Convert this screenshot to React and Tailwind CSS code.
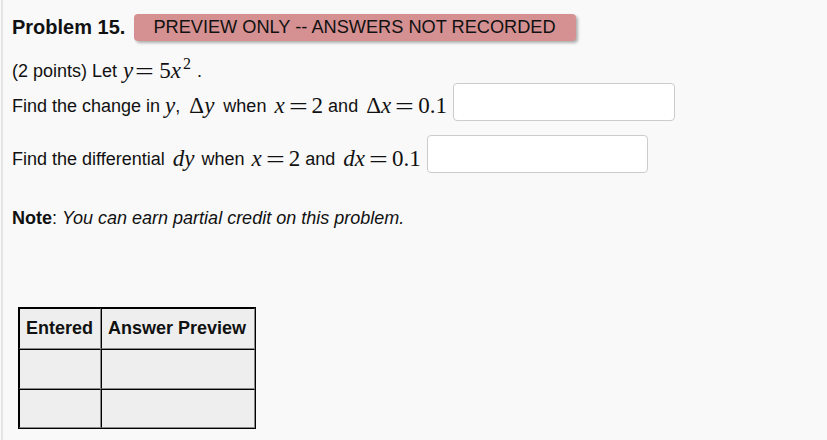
import React from "react";

const SERIF = "font-['Liberation_Serif','Times_New_Roman',serif] text-[23px]";

function Eq({ l = 7, r = 7 }) {
  return (
    <span
      className="inline-block scale-x-[1.45] leading-none"
      style={{ marginLeft: l, marginRight: r }}
    >
      =
    </span>
  );
}

export default function App() {
  const cell = "border-t border-l border-t-black border-l-black border-b border-r border-b-[#8a8a8a] border-r-[#8a8a8a]";
  return (
    <div className="min-h-[440px] w-[827px] bg-[#f9f9f9] pl-[1px]">
      <div className="min-h-[440px] border-l-2 border-[#e4e4e4] font-['Liberation_Sans',Arial,sans-serif] text-[18px] text-[#111]">
        {/* header */}
        <div className="flex items-center pt-[14px] pl-[9px]">
          <span className="text-[20px] font-bold leading-[27px]">Problem 15.</span>
          <span className="ml-[9px] h-[27px] flex items-center pl-[19px] pr-[20px] rounded-[4px] bg-[#d59191] text-[18.2px] shadow-[2px_2px_3px_rgba(0,0,0,0.3)]">
            PREVIEW ONLY -- ANSWERS NOT RECORDED
          </span>
        </div>

        {/* line 2 */}
        <div className="mt-[18px] h-[24px] flex items-center pl-[9px] whitespace-pre">
          <span>(2 points) Let </span>
          <span className={`${SERIF} flex items-center`}>
            <span className="italic ml-[1px]">y</span>
            <Eq l={5} r={8} />
            <span>5</span>
            <span className="italic">x</span>
            <span className="text-[16px] -translate-y-[7px] ml-[2px]">2</span>
          </span>
          <span className="ml-[6px]">.</span>
        </div>

        {/* line 3 */}
        <div className="h-[38px] flex items-center pl-[9px] whitespace-pre">
          <span className="pt-[9px] flex items-center">
            <span>Find the change in </span>
            <span className={`${SERIF} italic`}>y</span>
            <span>, </span>
            <span className={`${SERIF} ml-[4px]`}>
              Δ<span className="italic">y</span>
            </span>
            <span className="ml-[4px]"> when </span>
            <span className={`${SERIF} flex items-center ml-[3px]`}>
              <span className="italic">x</span>
              <Eq />
              <span>2</span>
            </span>
            <span> and </span>
            <span className={`${SERIF} flex items-center ml-[3px]`}>
              <span>Δ</span>
              <span className="italic">x</span>
              <Eq />
              <span>0.1</span>
            </span>
          </span>
          <input
            type="text"
            className="ml-[6px] w-[222px] h-[38px] bg-white border border-[#cccccc] rounded-[4px] outline-none"
          />
        </div>

        {/* line 4 */}
        <div className="mt-[14px] h-[38px] flex items-center pl-[9px] whitespace-pre">
          <span className="pt-[10px] flex items-center">
            <span>Find the differential </span>
            <span className={`${SERIF} italic ml-[3px]`}>dy</span>
            <span className="ml-[2px]"> when </span>
            <span className={`${SERIF} flex items-center ml-[2px]`}>
              <span className="italic">x</span>
              <Eq />
              <span>2</span>
            </span>
            <span> and </span>
            <span className={`${SERIF} flex items-center ml-[3px]`}>
              <span className="italic">dx</span>
              <Eq />
              <span>0.1</span>
            </span>
          </span>
          <input
            type="text"
            className="ml-[6px] w-[221px] h-[38px] bg-white border border-[#cccccc] rounded-[4px] outline-none"
          />
        </div>

        {/* note */}
        <div className="mt-[33px] h-[24px] flex items-center pl-[9px] whitespace-pre">
          <span className="font-bold">Note</span>
          <span>: </span>
          <span className="italic">You can earn partial credit on this problem.</span>
        </div>

        {/* table */}
        <div className="mt-[77px] pl-[15px]">
          <table className="border-separate border-spacing-0 border border-black bg-[#eeeeee]">
            <thead>
              <tr>
                <th className={`w-[82px] h-[41px] ${cell} font-bold text-left px-[6px]`}>Entered</th>
                <th className={`w-[154px] h-[41px] ${cell} font-bold text-left px-[6px]`}>Answer Preview</th>
              </tr>
            </thead>
            <tbody>
              <tr>
                <td className={`h-[40px] ${cell}`}></td>
                <td className={`h-[40px] ${cell}`}></td>
              </tr>
              <tr>
                <td className={`h-[39px] ${cell}`}></td>
                <td className={`h-[39px] ${cell}`}></td>
              </tr>
            </tbody>
          </table>
        </div>
      </div>
    </div>
  );
}
